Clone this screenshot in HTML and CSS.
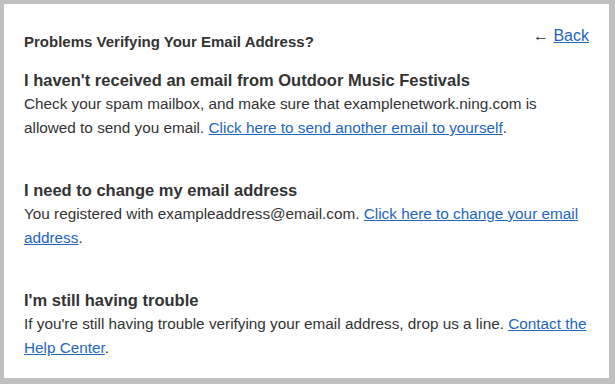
FILE: index.html
```html
<!DOCTYPE html>
<html>
<head>
<meta charset="utf-8">
<link rel="stylesheet" href="styles.css">
</head>
<body>
<div class="panel">
  <div class="top">
    <h1 class="title">Problems Verifying Your Email Address?</h1>
    <div class="back"><span class="arrow">&larr;</span> <a href="#">Back</a></div>
  </div>
  <div class="section first">
    <h2>I haven't received an email from Outdoor Music Festivals</h2>
    <p>Check your spam mailbox, and make sure that examplenetwork.ning.com is allowed to send you email. <a href="#">Click here to send another email to yourself</a>.</p>
  </div>
  <div class="section">
    <h2>I need to change my email address</h2>
    <p>You registered with exampleaddress@email.com. <a href="#">Click here to change your email address</a>.</p>
  </div>
  <div class="section">
    <h2>I'm still having trouble</h2>
    <p>If you're still having trouble verifying your email address, drop us a line. <a href="#">Contact the Help Center</a>.</p>
  </div>
</div>
</body>
</html>
```
FILE: styles.css
```css
html, body {
  margin: 0;
  padding: 0;
  background: #c0c0c0;
}
body {
  font-family: "Liberation Sans", Arial, sans-serif;
  color: #333333;
}
.panel {
  box-sizing: border-box;
  width: 605px;
  height: 374px;
  margin: 4px 0 0 4px;
  background: #ffffff;
  padding: 28px 18px 0 20px;
}
.top {
  display: flex;
  justify-content: space-between;
  align-items: flex-start;
}
.title {
  margin: 0;
  font-size: 15px;
  line-height: 20px;
  font-weight: bold;
}
.back {
  font-size: 16px;
  line-height: 20px;
  margin-top: -6px;
  margin-right: 2px;
}
.arrow {
  color: #333333;
}
a {
  color: #2466bf;
  text-decoration: underline;
}
.section {
  margin-top: 39px;
}
.section.first {
  margin-top: 17px;
}
h2 {
  margin: 0;
  font-size: 16.5px;
  line-height: 22px;
  font-weight: bold;
}
p {
  margin: 1px 0 0 0;
  font-size: 15.3px;
  line-height: 24px;
}
```
